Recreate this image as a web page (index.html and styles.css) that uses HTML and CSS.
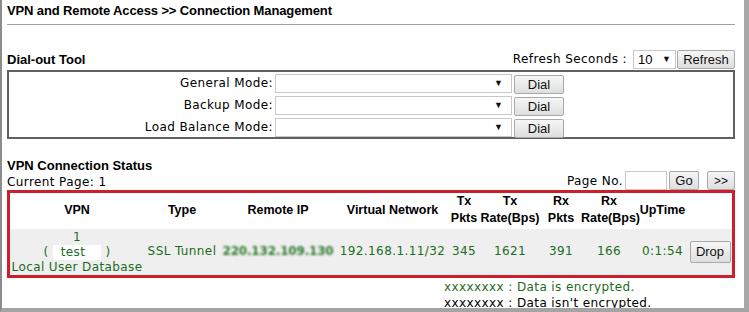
FILE: index.html
```html
<!DOCTYPE html>
<html>
<head>
<meta charset="utf-8">
<link rel="stylesheet" href="styles.css">
</head>
<body>
<div class="frame">
  <div class="title">VPN and Remote Access &gt;&gt; Connection Management</div>
  <div class="rule"></div>

  <div class="bar dial-bar">
    <div class="h">Dial-out Tool</div>
    <div class="refresh">
      <span class="v">Refresh Seconds :</span>
      <span class="sel small">10<span class="arrow">▼</span></span>
      <span class="btn">Refresh</span>
    </div>
  </div>

  <div class="dialbox">
    <div class="drow">
      <span class="lbl">General Mode:</span>
      <span class="sel wide"><span class="arrow">▼</span></span>
      <span class="btn dial">Dial</span>
    </div>
    <div class="drow">
      <span class="lbl">Backup Mode:</span>
      <span class="sel wide"><span class="arrow">▼</span></span>
      <span class="btn dial">Dial</span>
    </div>
    <div class="drow">
      <span class="lbl">Load Balance Mode:</span>
      <span class="sel wide"><span class="arrow">▼</span></span>
      <span class="btn dial">Dial</span>
    </div>
  </div>

  <div class="h status-h">VPN Connection Status</div>
  <div class="bar page-bar">
    <div class="v">Current Page: 1</div>
    <div class="pager">
      <span class="v">Page No.</span>
      <span class="inp"></span>
      <span class="btn go">Go</span>
      <span class="btn next">&gt;&gt;</span>
    </div>
  </div>

  <div class="redbox">
    <table class="vpn">
      <colgroup>
        <col class="c1"><col class="c2"><col class="c3"><col class="c4"><col class="c5">
        <col class="c6"><col class="c7"><col class="c8"><col class="c9"><col class="c10">
      </colgroup>
      <thead>
        <tr>
          <th>VPN</th><th>Type</th><th>Remote IP</th><th>Virtual Network</th>
          <th>Tx<br>Pkts</th><th>Tx<br>Rate(Bps)</th><th>Rx<br>Pkts</th><th>Rx<br>Rate(Bps)</th>
          <th>UpTime</th><th></th>
        </tr>
      </thead>
      <tbody>
        <tr>
          <td class="vpncell">1<br>( <span class="user">test</span> )<br>Local User Database</td>
          <td>SSL Tunnel</td>
          <td><span class="blur">220.132.109.130</span></td>
          <td>192.168.1.11/32</td>
          <td>345</td>
          <td>1621</td>
          <td>391</td>
          <td>166</td>
          <td>0:1:54</td>
          <td><span class="btn drop">Drop</span></td>
        </tr>
      </tbody>
    </table>
  </div>

  <div class="legend">
    <div class="enc">xxxxxxxx : Data is encrypted.</div>
    <div class="noenc">xxxxxxxx : Data isn't encrypted.</div>
  </div>
</div>
</body>
</html>
```

FILE: styles.css
```css
html, body {
  margin: 0;
  padding: 0;
  background: #fff;
}
.frame {
  width: 749px;
  height: 312px;
  box-sizing: border-box;
  border-left: 2px solid #8c8c8c;
  border-right: 5px solid #a8a8a8;
  border-bottom: 4px solid #a4a4a4;
  padding: 0 9px 0 5px;
  overflow: hidden;
  font-family: "DejaVu Sans", Verdana, sans-serif;
  font-size: 12px;
  letter-spacing: 0.4px;
  color: #000;
}
.title {
  font-family: "Liberation Sans", Arial, sans-serif;
  font-weight: bold;
  font-size: 13px;
  letter-spacing: -0.12px;
  line-height: 16px;
  padding-top: 3px;
}
.rule {
  margin-top: 5px;
  height: 1px;
  background: #a0a0a0;
}
.h {
  font-family: "Liberation Sans", Arial, sans-serif;
  font-weight: bold;
  font-size: 13px;
  letter-spacing: 0;
  line-height: 15px;
}
.v {
  font-family: "DejaVu Sans", Verdana, sans-serif;
  font-size: 12px;
}
.bar {
  display: flex;
  justify-content: space-between;
  align-items: center;
}
.dial-bar {
  margin-top: 24px;
  height: 20px;
}
.refresh {
  display: flex;
  align-items: center;
  gap: 4px;
}
.refresh .v {
  margin-right: 2px;
}
.sel {
  display: inline-flex;
  align-items: center;
  justify-content: space-between;
  box-sizing: border-box;
  border: 1px solid #c8c8c8;
  background: #fff;
  font-family: "Liberation Sans", Arial, sans-serif;
  font-size: 13px;
  letter-spacing: 0;
  height: 19px;
  padding: 0 4px;
}
.sel.small {
  width: 43px;
  gap: 6px;
}
.arrow {
  font-size: 9px;
  margin-left: auto;
  color: #111;
}
.btn {
  display: inline-flex;
  align-items: center;
  justify-content: center;
  box-sizing: border-box;
  border: 1px solid #a9a9a9;
  border-radius: 2px;
  background: linear-gradient(#f6f6f6, #dedede);
  font-family: "Liberation Sans", Arial, sans-serif;
  font-size: 13px;
  letter-spacing: 0;
  color: #111;
  height: 19px;
  padding: 0 5px;
}
.refresh .btn {
  width: 58px;
  margin-left: -3px;
}
.dialbox {
  margin-top: 1px;
  border: 2px solid #606060;
  height: 69px;
  box-sizing: border-box;
  padding-top: 0;
}
.drow {
  display: grid;
  grid-template-columns: 264px 237px 50px;
  column-gap: 2px;
  align-items: center;
  height: 22px;
}
.lbl {
  text-align: right;
}
.sel.wide {
  width: 237px;
  padding-right: 8px;
}
.btn.dial {
  width: 50px;
  height: 19px;
  margin-top: 3px;
}
.status-h {
  margin-top: 19px;
}
.page-bar {
  height: 18px;
}
.pager {
  display: flex;
  align-items: center;
  margin-top: -3px;
}
.inp {
  display: inline-block;
  width: 42px;
  height: 19px;
  box-sizing: border-box;
  border: 1px solid #c8c8c8;
  background: #fff;
  margin-left: 2px;
}
.btn.go {
  width: 30px;
  margin-left: 2px;
}
.btn.next {
  width: 28px;
  margin-left: 8px;
  font-size: 12px;
}
.redbox {
  border: 3px solid #cc1f2b;
  height: 88px;
  box-sizing: border-box;
  margin-top: -1px;
  overflow: hidden;
}
.vpn {
  border-collapse: separate;
  border-spacing: 0;
  table-layout: fixed;
  width: 722px;
}
.c1 { width: 134px; }
.c2 { width: 76px; }
.c3 { width: 116px; }
.c4 { width: 113px; }
.c5 { width: 30px; }
.c6 { width: 62px; }
.c7 { width: 40px; }
.c8 { width: 56px; }
.c9 { width: 51px; }
.c10 { width: 44px; }
.vpn th {
  font-family: "Liberation Sans", Arial, sans-serif;
  font-weight: bold;
  font-size: 12.5px;
  letter-spacing: 0;
  line-height: 17px;
  height: 32px;
  padding: 0;
  text-align: center;
  background: #fff;
}
.vpn td {
  background: #efefef;
  color: #1d6b1d;
  font-family: "DejaVu Sans", Verdana, sans-serif;
  font-size: 12px;
  line-height: 15px;
  text-align: center;
  padding: 0 0 3px;
  height: 45px;
  white-space: nowrap;
}
.vpn td.vpncell {
  vertical-align: top;
  padding: 1px 0 0;
}
.vpn thead tr th {
  border-bottom: 2px solid #fff;
}
.user {
  display: inline-block;
  background: #fff;
  padding: 0 16px 0 8px;
  color: #1d6b1d;
}
.blur {
  filter: blur(0.9px);
  font-weight: bold;
  letter-spacing: -0.2px;
  color: #2e7a2e;
}
.btn.drop {
  width: 41px;
  height: 22px;
}
.legend {
  margin-left: 437px;
  margin-top: 1px;
  line-height: 16px;
}
.enc {
  color: #1d6b1d;
}
.noenc {
  color: #000;
}
```
